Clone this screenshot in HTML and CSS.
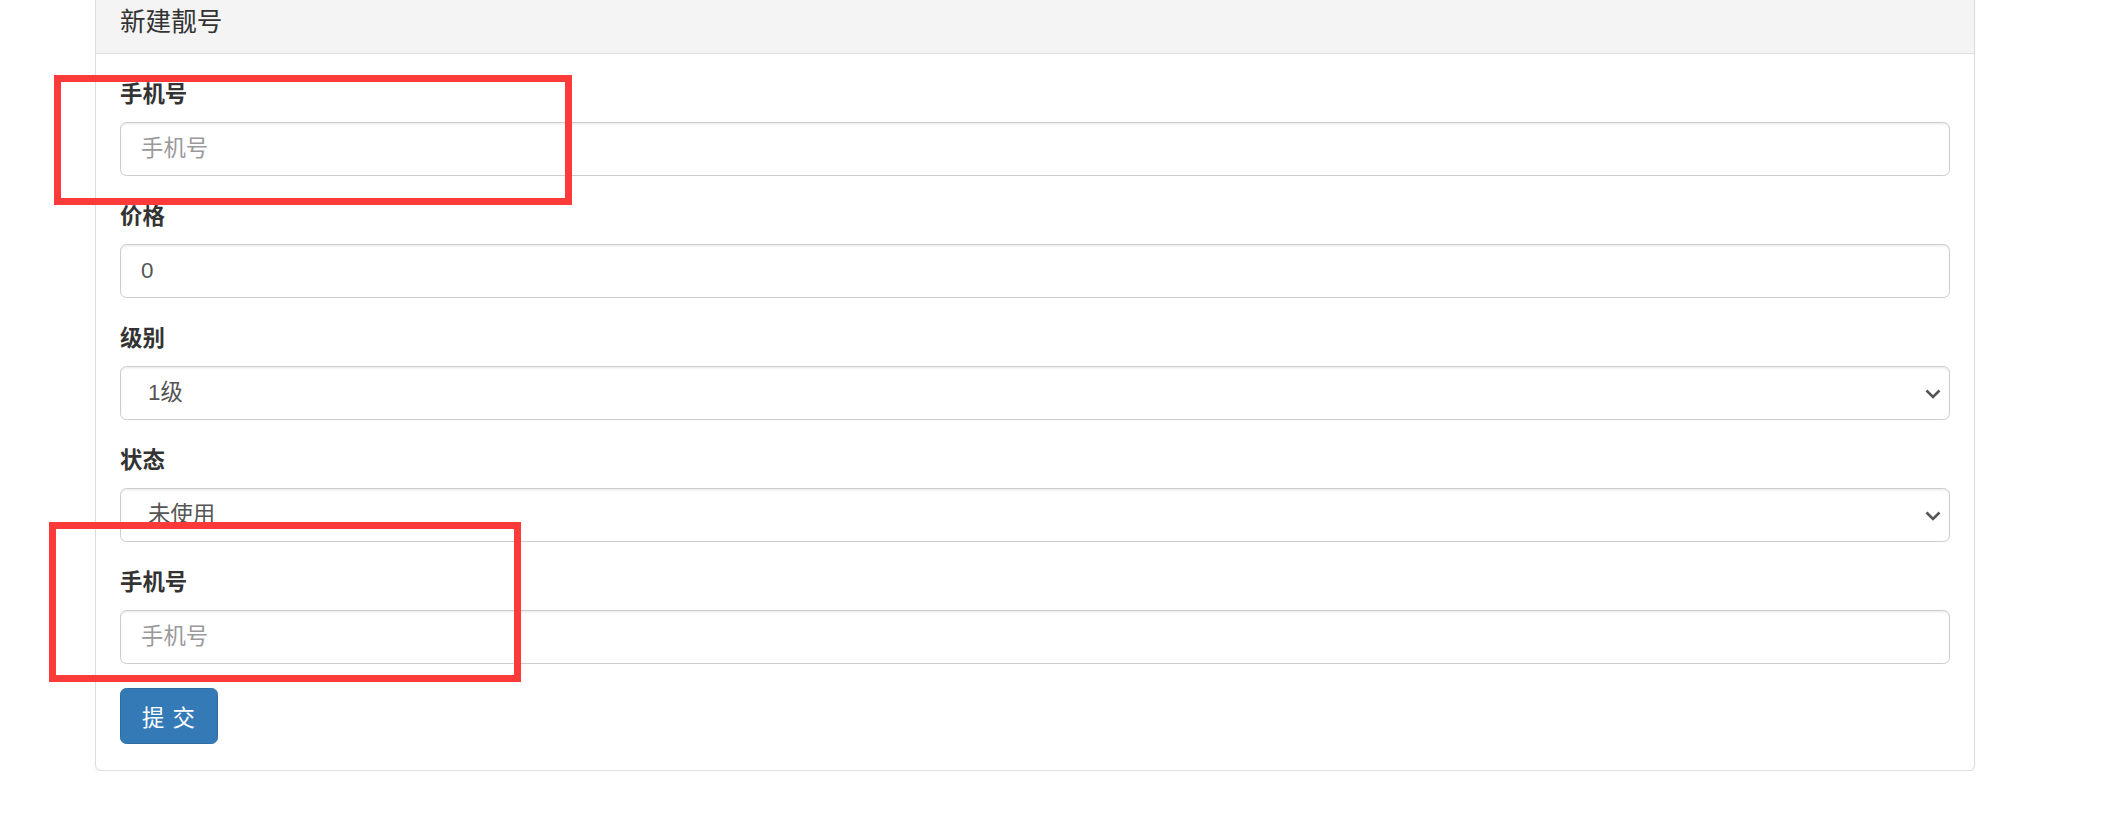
FILE: index.html
```html
<!DOCTYPE html>
<html lang="zh-CN">
<head>
<meta charset="utf-8">
<title>新建靓号</title>
<link rel="stylesheet" href="styles.css">
</head>
<body>
<div class="page">
  <div class="panel">
    <div class="panel-heading">新建靓号</div>
    <div class="panel-body">
      <form class="form">
        <div class="form-group">
          <label class="label">手机号</label>
          <input class="control" type="text" placeholder="手机号">
        </div>
        <div class="form-group">
          <label class="label">价格</label>
          <input class="control" type="text" value="0">
        </div>
        <div class="form-group">
          <label class="label">级别</label>
          <div class="select-wrap">
            <select class="control select">
              <option>1级</option>
            </select>
            <svg class="chevron" width="16" height="10" viewBox="0 0 16 10"><path d="M1.5 1.5 L8 8 L14.5 1.5" fill="none" stroke="#555" stroke-width="2.6"/></svg>
          </div>
        </div>
        <div class="form-group">
          <label class="label">状态</label>
          <div class="select-wrap">
            <select class="control select">
              <option>未使用</option>
            </select>
            <svg class="chevron" width="16" height="10" viewBox="0 0 16 10"><path d="M1.5 1.5 L8 8 L14.5 1.5" fill="none" stroke="#555" stroke-width="2.6"/></svg>
          </div>
        </div>
        <div class="form-group">
          <label class="label">手机号</label>
          <input class="control" type="text" placeholder="手机号">
        </div>
        <button class="btn" type="button">提 交</button>
      </form>
    </div>
  </div>
  <div class="mark mark-one"></div>
  <div class="mark mark-two"></div>
</div>
</body>
</html>
```

FILE: styles.css
```css
html, body {
  margin: 0;
  padding: 0;
  background: #fff;
}

body {
  font-family: "Liberation Sans", "Noto Sans CJK SC", sans-serif;
  font-size: 22.4px;
  color: #333;
}

.page {
  position: relative;
  display: flow-root;
  padding-left: 95px;
}

.panel {
  width: 1880px;
  box-sizing: border-box;
  margin-top: -10px;
  border: 1px solid #ddd;
  border-radius: 6px;
  background: #fff;
  box-shadow: 0 1.6px 1.6px rgba(0, 0, 0, 0.05);
}

.panel-heading {
  height: 62px;
  line-height: 62px;
  padding: 0 24px;
  background: #f4f4f4;
  border-bottom: 1px solid #ddd;
  font-size: 25.6px;
  color: #333;
}

.panel-body {
  padding: 24px 24px 26px 24px;
}

.form-group {
  margin-bottom: 24px;
}

.label {
  display: block;
  font-weight: bold;
  line-height: 34px;
  margin-bottom: 9.6px;
  color: #333;
}

.control {
  display: block;
  width: 100%;
  height: 54.4px;
  box-sizing: border-box;
  padding: 0 20px;
  border: 1px solid #ccc;
  border-radius: 6.4px;
  background: #fff;
  box-shadow: inset 0 1.6px 1.6px rgba(0, 0, 0, 0.075);
  font-family: inherit;
  font-size: 22.4px;
  color: #555;
  outline: none;
}

.control::placeholder {
  color: #999;
}

.select-wrap {
  position: relative;
}

.select {
  -webkit-appearance: none;
  appearance: none;
  padding-left: 27px;
}

.chevron {
  position: absolute;
  right: 9px;
  top: 23px;
}

.btn {
  display: block;
  margin-top: 2px;
  height: 56px;
  padding: 0 21px;
  border: 1px solid #2e6da4;
  border-radius: 6.4px;
  background: #337ab7;
  color: #fff;
  font-family: inherit;
  font-size: 22.4px;
  letter-spacing: 1px;
}

.mark {
  position: absolute;
  box-sizing: border-box;
  border: 7px solid #fc3a3a;
}

.mark-one {
  left: 54px;
  top: 75px;
  width: 518px;
  height: 130px;
}

.mark-two {
  left: 49px;
  top: 522px;
  width: 472px;
  height: 160px;
}
```
